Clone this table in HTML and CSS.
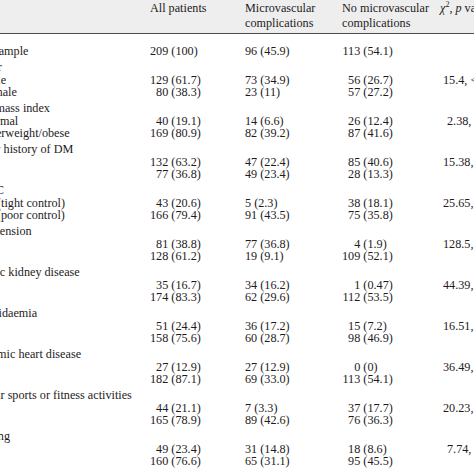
FILE: index.html
```html
<!DOCTYPE html>
<html lang="en">
<head>
<meta charset="utf-8"/>
<meta content="width=device-width, initial-scale=1.0" name="viewport"/>
<title>Patient characteristics</title>
<link rel="stylesheet" href="styles.css">
</head>
<body>
<div class="frame">
<table class="tabla">
<colgroup>
<col class="c-label"/>
<col class="c-all"/>
<col class="c-micro"/>
<col class="c-nomicro"/>
<col class="c-test"/>
</colgroup>
<thead>
<tr>
<th></th>
<th>All patients</th>
<th>Microvascular<br/>complications</th>
<th>No microvascular<br/>complications</th>
<th class="test"><i>χ</i><sup>2</sup>, <i>p</i> value</th>
</tr>
</thead>
<tbody>
<!-- Muestra -->
<tr class="first">
<td>Total sample</td>
<td><span class="n">209</span> (100)</td>
<td>96 (45.9)</td>
<td><span class="n">113</span> (54.1)</td>
<td class="test"></td>
</tr>
<tr class="grupo">
<td>Gender</td><td></td><td></td><td></td><td class="test"></td>
</tr>
<tr>
<td class="sub">Male</td>
<td><span class="n">129</span> (61.7)</td>
<td>73 (34.9)</td>
<td><span class="n">56</span> (26.7)</td>
<td class="test">15.4, &lt;0.001</td>
</tr>
<tr>
<td class="sub">Female</td>
<td><span class="n">80</span> (38.3)</td>
<td>23 (11)</td>
<td><span class="n">57</span> (27.2)</td>
<td class="test"></td>
</tr>
<!-- IMC -->
<tr class="grupo">
<td>Body mass index</td><td></td><td></td><td></td><td class="test"></td>
</tr>
<tr>
<td class="sub">Normal</td>
<td><span class="n">40</span> (19.1)</td>
<td>14 (6.6)</td>
<td><span class="n">26</span> (12.4)</td>
<td class="test short">2.38, 0.123</td>
</tr>
<tr>
<td class="sub">Overweight/obese</td>
<td><span class="n">169</span> (80.9)</td>
<td>82 (39.2)</td>
<td><span class="n">87</span> (41.6)</td>
<td class="test"></td>
</tr>
<tr class="grupo">
<td>Family history of DM</td><td></td><td></td><td></td><td class="test"></td>
</tr>
<tr>
<td class="sub">Yes</td>
<td><span class="n">132</span> (63.2)</td>
<td>47 (22.4)</td>
<td><span class="n">85</span> (40.6)</td>
<td class="test">15.38, &lt;0.001</td>
</tr>
<tr>
<td class="sub">No</td>
<td><span class="n">77</span> (36.8)</td>
<td>49 (23.4)</td>
<td><span class="n">28</span> (13.3)</td>
<td class="test"></td>
</tr>
<tr class="grupo">
<td>HbA1C</td><td></td><td></td><td></td><td class="test"></td>
</tr>
<tr>
<td class="sub">&lt;7 (tight control)</td>
<td><span class="n">43</span> (20.6)</td>
<td>5 (2.3)</td>
<td><span class="n">38</span> (18.1)</td>
<td class="test">25.65, &lt;0.001</td>
</tr>
<tr>
<td class="sub">≥7 (poor control)</td>
<td><span class="n">166</span> (79.4)</td>
<td>91 (43.5)</td>
<td><span class="n">75</span> (35.8)</td>
<td class="test"></td>
</tr>
<tr class="grupo">
<td>Hypertension</td><td></td><td></td><td></td><td class="test"></td>
</tr>
<tr>
<td class="sub">Yes</td>
<td><span class="n">81</span> (38.8)</td>
<td>77 (36.8)</td>
<td><span class="n">4</span> (1.9)</td>
<td class="test">128.5, &lt;0.001</td>
</tr>
<tr>
<td class="sub">No</td>
<td><span class="n">128</span> (61.2)</td>
<td>19 (9.1)</td>
<td><span class="n">109</span> (52.1)</td>
<td class="test"></td>
</tr>
<tr class="grupo">
<td>Chronic kidney disease</td><td></td><td></td><td></td><td class="test"></td>
</tr>
<tr>
<td class="sub">Yes</td>
<td><span class="n">35</span> (16.7)</td>
<td>34 (16.2)</td>
<td><span class="n">1</span> (0.47)</td>
<td class="test">44.39, &lt;0.001</td>
</tr>
<tr>
<td class="sub">No</td>
<td><span class="n">174</span> (83.3)</td>
<td>62 (29.6)</td>
<td><span class="n">112</span> (53.5)</td>
<td class="test"></td>
</tr>
<tr class="grupo">
<td>Dyslipidaemia</td><td></td><td></td><td></td><td class="test"></td>
</tr>
<tr>
<td class="sub">Yes</td>
<td><span class="n">51</span> (24.4)</td>
<td>36 (17.2)</td>
<td><span class="n">15</span> (7.2)</td>
<td class="test">16.51, &lt;0.001</td>
</tr>
<tr>
<td class="sub">No</td>
<td><span class="n">158</span> (75.6)</td>
<td>60 (28.7)</td>
<td><span class="n">98</span> (46.9)</td>
<td class="test"></td>
</tr>
<tr class="grupo">
<td>Ischaemic heart disease</td><td></td><td></td><td></td><td class="test"></td>
</tr>
<tr>
<td class="sub">Yes</td>
<td><span class="n">27</span> (12.9)</td>
<td>27 (12.9)</td>
<td><span class="n">0</span> (0)</td>
<td class="test">36.49, &lt;0.001</td>
</tr>
<tr>
<td class="sub">No</td>
<td><span class="n">182</span> (87.1)</td>
<td>69 (33.0)</td>
<td><span class="n">113</span> (54.1)</td>
<td class="test"></td>
</tr>
<tr class="grupo">
<td>Regular sports or fitness activities</td><td></td><td></td><td></td><td class="test"></td>
</tr>
<tr>
<td class="sub">Yes</td>
<td><span class="n">44</span> (21.1)</td>
<td>7 (3.3)</td>
<td><span class="n">37</span> (17.7)</td>
<td class="test">20.23, &lt;0.001</td>
</tr>
<tr>
<td class="sub">No</td>
<td><span class="n">165</span> (78.9)</td>
<td>89 (42.6)</td>
<td><span class="n">76</span> (36.3)</td>
<td class="test"></td>
</tr>
<tr class="grupo">
<td>Smoking</td><td></td><td></td><td></td><td class="test"></td>
</tr>
<tr>
<td class="sub">Yes</td>
<td><span class="n">49</span> (23.4)</td>
<td>31 (14.8)</td>
<td><span class="n">18</span> (8.6)</td>
<td class="test short">7.74, 0.005</td>
</tr>
<tr>
<td class="sub">No</td>
<td><span class="n">160</span> (76.6)</td>
<td>65 (31.1)</td>
<td><span class="n">95</span> (45.5)</td>
<td class="test"></td>
</tr>
</tbody>
</table>
</div>
</body>
</html>
```

FILE: styles.css
```css
:root {
  --color-texto: #1e1b1c;
  --color-cabecera: #eeeeee;
  --color-linea: #4d4d4d;
}

* {
  box-sizing: border-box;
}

body {
  margin: 0;
  background: white;
  color: var(--color-texto);
  font-family: 'Liberation Serif', 'Times New Roman', serif;
  font-size: 12.2px;
}

.frame {
  width: 474px;
  height: 474px;
  overflow: hidden;
}

.tabla {
  border-collapse: collapse;
  table-layout: fixed;
  width: 560px;
  margin-left: -34px;
  white-space: nowrap;
}

.c-label { width: 184px; }
.c-all { width: 95px; }
.c-micro { width: 97px; }
.c-nomicro { width: 98px; }
.c-test { width: 86px; }

th, td {
  padding: 0;
  text-align: left;
  font-weight: normal;
}

thead tr {
  background: var(--color-cabecera);
  border-bottom: 1px solid var(--color-linea);
}

th {
  height: 33px;
  vertical-align: top;
  line-height: 15px;
  padding-top: 1px;
}

th sup {
  font-size: 8px;
  line-height: 0;
  vertical-align: 5px;
}

td {
  line-height: 12px;
  height: 12px;
}

tr.first td {
  padding-top: 11px;
  height: 23px;
}

tr.grupo td {
  padding-top: 4px;
  padding-bottom: 1px;
  height: 17px;
}

td.sub {
  padding-left: 15px;
}

td.test {
  padding-left: 3px;
}

td.short {
  padding-left: 7px;
}

.n {
  display: inline-block;
  width: 18.3px;
  text-align: right;
}
```
